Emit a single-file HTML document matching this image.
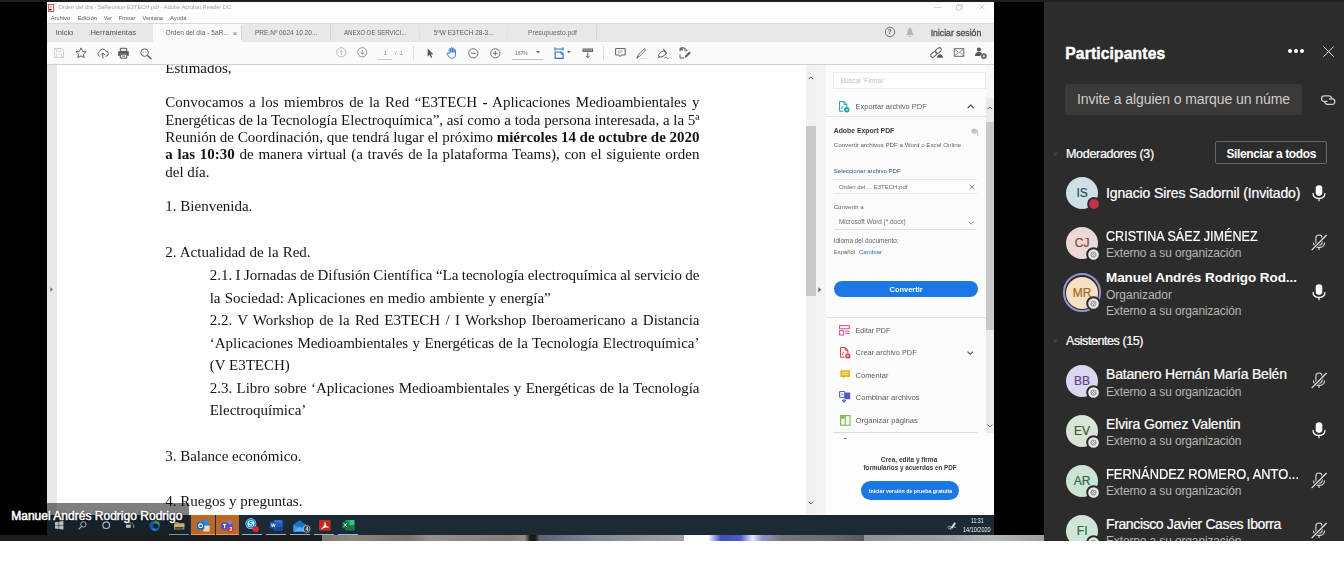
<!DOCTYPE html>
<html lang="es">
<head>
<meta charset="utf-8">
<title>Participantes</title>
<style>
*{box-sizing:border-box;margin:0;padding:0}
html,body{width:1344px;height:576px;overflow:hidden;background:#fff}
body{position:relative;font-family:"Liberation Sans",sans-serif}
.abs{position:absolute}
.t{position:absolute;white-space:pre;line-height:1}
.ln{position:absolute;white-space:nowrap;font-family:"Liberation Serif",serif;font-size:15px;line-height:17px;color:#141414;height:17px;white-space:pre}
.j{text-align:justify;text-align-last:justify;white-space:normal}
svg{overflow:visible}
</style>
</head>
<body>
<div class="abs" style="left:0.0px;top:0.0px;width:1044.0px;height:541.0px;background:#000;"></div>
<div class="abs" style="left:0;top:0;width:1044px;height:541px;filter:blur(0.45px)">
<div class="abs" style="left:0.0px;top:0.0px;width:1044.0px;height:541.0px;background:#000;"></div>
<div class="abs" style="left:47.0px;top:2.0px;width:947.0px;height:513.0px;background:#fdfdfd;"></div>
<svg class="abs" style="left:48.3px;top:3.5px;" width="6" height="8" viewBox="0 0 6 8"><rect x="0.4" y="0.4" width="5.2" height="7.2" fill="#fff" stroke="#d8453a" stroke-width="0.9"/><rect x="1.3" y="4.8" width="2.2" height="1.6" fill="#222"/><rect x="2" y="1.6" width="1.2" height="2" fill="#e0877f"/></svg>
<div class="t" style="left:58.4px;top:5.4px;font-size:5.69px;color:#a3a3a3;">Orden del día - 5aReunion E3TECH.pdf - Adobe Acrobat Reader DC</div>
<svg class="abs" style="left:933.0px;top:3.0px;" width="54" height="9" viewBox="0 0 54 9"><path d="M1 4.5h7" stroke="#c9c9c9" stroke-width="0.8" fill="none"/><path d="M23.5 2.5h4.5v4.5h-4.5zM25 2.5v-1.2h4.3v4.3h-1.3" stroke="#c6c6c6" stroke-width="0.8" fill="none"/><path d="M46.5 1.5l5 5M51.5 1.5l-5 5" stroke="#c6c6c6" stroke-width="0.8" fill="none"/></svg>
<div class="t" style="left:50.7px;top:15.9px;font-size:5.88px;color:#5a5a5a;">Archivo</div>
<div class="t" style="left:77.7px;top:15.9px;font-size:5.88px;color:#5a5a5a;">Edición</div>
<div class="t" style="left:103.8px;top:16.2px;font-size:5.46px;color:#5a5a5a;">Ver</div>
<div class="t" style="left:118.7px;top:16.0px;font-size:5.82px;color:#5a5a5a;">Firmar</div>
<div class="t" style="left:142.5px;top:16.1px;font-size:5.58px;color:#5a5a5a;">Ventana</div>
<div class="t" style="left:170.0px;top:16.0px;font-size:5.86px;color:#5a5a5a;">Ayuda</div>
<div class="abs" style="left:47.0px;top:23.3px;width:947.0px;height:18.3px;background:#e8e8e8;border-top:1px solid #d9d9d9;"></div>
<div class="t" style="left:55.7px;top:29.2px;font-size:7.54px;color:#505050;">Inicio</div>
<div class="t" style="left:90.4px;top:29.1px;font-size:7.6px;color:#505050;">Herramientas</div>
<div class="abs" style="left:153.0px;top:23.8px;width:88.5px;height:18.2px;background:#fafafa;"></div>
<div class="t" style="left:165.5px;top:29.9px;font-size:6.6px;color:#5c5c5c;">Orden del día - 5aR...</div>
<div class="t" style="left:233.0px;top:29.8px;font-size:7px;color:#555;letter-spacing:0.506px;">×</div>
<div class="abs" style="left:241.1px;top:25.0px;width:0.8px;height:15.0px;background:#d0d0d0;"></div>
<div class="abs" style="left:329.9px;top:25.0px;width:0.8px;height:15.0px;background:#d2d2d2;"></div>
<div class="abs" style="left:418.6px;top:25.0px;width:0.8px;height:15.0px;background:#e0e0e0;"></div>
<div class="abs" style="left:507.4px;top:25.0px;width:0.8px;height:15.0px;background:#e1e1e1;"></div>
<div class="abs" style="left:596.2px;top:25.0px;width:0.8px;height:15.0px;background:#d9d9d9;"></div>
<div class="t" style="left:254.9px;top:30.0px;font-size:6.55px;color:#5c5c5c;">PRE.Nº 0024 10 20...</div>
<div class="t" style="left:343.7px;top:30.0px;font-size:6.6px;color:#5c5c5c;transform:scaleX(0.9236);transform-origin:0 50%;">ANEXO DE SERVICI...</div>
<div class="t" style="left:433.8px;top:30.0px;font-size:6.51px;color:#5c5c5c;">5ºW E3TECH 28-3...</div>
<div class="t" style="left:527.9px;top:29.9px;font-size:6.74px;color:#6a6a6a;">Presupuesto.pdf</div>
<svg class="abs" style="left:883.5px;top:26.0px;" width="12" height="12" viewBox="0 0 12 12"><circle cx="6" cy="6" r="4.7" fill="none" stroke="#6e6e6e" stroke-width="1"/></svg>
<div class="t" style="left:887.5px;top:29.2px;font-size:6.87px;color:#5a5a5a;font-weight:700;">?</div>
<svg class="abs" style="left:905.0px;top:26.5px;" width="10" height="11" viewBox="0 0 10 11"><path d="M5 0.5C3.2 1.6 2.6 3.5 2.6 5.5L1.2 8.2h7.6L7.4 5.5C7.4 3.5 6.8 1.6 5 0.5zM3.9 9h2.2v1H3.9z" fill="#b4b4b4"/></svg>
<div class="t" style="left:930.7px;top:28.6px;font-size:8.67px;color:#4a4a4a;-webkit-text-stroke:0.3px #4a4a4a;">Iniciar sesión</div>
<div class="abs" style="left:47.0px;top:42.0px;width:947.0px;height:22.5px;background:#fbfbfb;border-bottom:1px solid #d0d0d0;"></div>
<svg class="abs" style="left:54.0px;top:48.0px;" width="10" height="10" viewBox="0 0 10 10"><path d="M0.5 0.5h7l2 2v7h-9z" fill="none" stroke="#cfcfcf" stroke-width="1"/><path d="M2.5 0.5v3h4.5v-3M2.5 9.5v-3.5h5v3.5" fill="none" stroke="#d6d6d6" stroke-width="0.9"/></svg>
<svg class="abs" style="left:75.0px;top:47.3px;" width="12" height="11" viewBox="0 0 12 11"><path d="M6 0.9l1.55 3.3 3.55 0.45-2.6 2.45 0.68 3.55L6 8.9 2.82 10.65l0.68-3.55L0.9 4.65l3.55-0.45z" fill="none" stroke="#5f5f5f" stroke-width="1" stroke-linejoin="round"/></svg>
<svg class="abs" style="left:97.0px;top:47.5px;" width="12" height="11" viewBox="0 0 12 11"><path d="M3.2 8.2H2.8A2.3 2.3 0 0 1 2.6 3.7 3.2 3.2 0 0 1 8.8 3.2 2.5 2.5 0 0 1 9 8.2H8.6" fill="none" stroke="#5f5f5f" stroke-width="1"/><path d="M5.8 10.6V5M3.9 6.8l1.9-1.9 1.9 1.9" fill="none" stroke="#5f5f5f" stroke-width="1"/></svg>
<svg class="abs" style="left:118.3px;top:47.5px;" width="11" height="10.5" viewBox="0 0 11 10.5"><path d="M2.3 0.3h6.4v3H2.3z" fill="none" stroke="#555" stroke-width="1"/><path d="M0.2 3.2h10.6v4.6H8.8v-2H2.2v2H0.2z" fill="#555"/><path d="M2.3 6.3h6.4v3.8H2.3z" fill="#fbfbfb" stroke="#555" stroke-width="1"/><rect x="4.2" y="7.6" width="2.6" height="1" fill="#555"/></svg>
<svg class="abs" style="left:140.2px;top:47.5px;" width="12" height="11.5" viewBox="0 0 12 11.5"><circle cx="4.6" cy="4.6" r="3.8" fill="none" stroke="#5f5f5f" stroke-width="1"/><path d="M7.4 7.4l4 3.6" stroke="#5f5f5f" stroke-width="1.3"/><circle cx="3.6" cy="4.2" r="0.45" fill="#888"/><circle cx="5.6" cy="4.2" r="0.45" fill="#888"/></svg>
<svg class="abs" style="left:335.6px;top:47.4px;" width="11" height="11" viewBox="0 0 11 11"><circle cx="5.3" cy="5.3" r="4.6" fill="none" stroke="#b6b6b6" stroke-width="1"/><path d="M5.3 7.8V3.6M3.7 5l1.6-1.6L6.9 5" fill="none" stroke="#b6b6b6" stroke-width="0.9"/></svg>
<svg class="abs" style="left:357.3px;top:47.4px;" width="11" height="11" viewBox="0 0 11 11"><circle cx="5.3" cy="5.3" r="4.6" fill="none" stroke="#909090" stroke-width="1"/><path d="M5.3 2.8V7M3.7 5.6l1.6 1.6 1.6-1.6" fill="none" stroke="#909090" stroke-width="0.9"/></svg>
<div class="t" style="left:383.8px;top:50.3px;font-size:6px;color:#777;letter-spacing:-0.744px;">1</div>
<div class="abs" style="left:378.0px;top:59.1px;width:13.8px;height:0.8px;background:#c8c8c8;"></div>
<div class="t" style="left:395.0px;top:50.3px;font-size:6px;color:#8a8a8a;letter-spacing:0.576px;">/ 1</div>
<div class="abs" style="left:413.0px;top:46.0px;width:0.8px;height:14.0px;background:#e0e0e0;"></div>
<svg class="abs" style="left:426.7px;top:47.5px;" width="7" height="11" viewBox="0 0 7 11"><path d="M0.6 0.4v8.4l2-1.9 1.4 3.1 1.3-0.6-1.4-3 2.6-0.2z" fill="#5a5a5a"/></svg>
<svg class="abs" style="left:445.8px;top:47.0px;" width="12" height="12" viewBox="0 0 12 12"><path d="M3.2 6.6V2.4a0.8 0.8 0 0 1 1.6 0V5.4 1.5a0.8 0.8 0 0 1 1.6 0V5.4 2a0.8 0.8 0 0 1 1.6 0V5.6 3.3a0.75 0.75 0 0 1 1.5 0V7.6c0 2.2-1.3 3.6-3.6 3.6-1.7 0-2.6-0.7-3.5-2.1L1 6.9c-0.5-0.8 0.6-1.5 1.2-0.8z" fill="none" stroke="#2a6fd6" stroke-width="0.9" stroke-linejoin="round"/></svg>
<svg class="abs" style="left:467.5px;top:47.5px;" width="11" height="11" viewBox="0 0 11 11"><circle cx="5.3" cy="5.3" r="4.6" fill="none" stroke="#5f5f5f" stroke-width="0.9"/><path d="M3 5.3h4.6" stroke="#5f5f5f" stroke-width="0.9"/></svg>
<svg class="abs" style="left:489.6px;top:47.5px;" width="11" height="11" viewBox="0 0 11 11"><circle cx="5.3" cy="5.3" r="4.6" fill="none" stroke="#5f5f5f" stroke-width="0.9"/><path d="M3 5.3h4.6M5.3 3v4.6" stroke="#5f5f5f" stroke-width="0.9"/></svg>
<div class="t" style="left:515.2px;top:50.4px;font-size:6.2px;color:#6e6e6e;transform:scaleX(0.8024);transform-origin:0 50%;">167%</div>
<svg class="abs" style="left:536.3px;top:51.4px;" width="4" height="3" viewBox="0 0 4 3"><path d="M0 0h4L2 2.4z" fill="#666"/></svg>
<div class="abs" style="left:512.3px;top:59.1px;width:31.2px;height:0.8px;background:#c4c4c4;"></div>
<svg class="abs" style="left:554.3px;top:46.8px;" width="11" height="12.5" viewBox="0 0 11 12.5"><path d="M1 0.3v3.2M9 0.3v3.2M1 2h8" fill="none" stroke="#2a6fd6" stroke-width="1.1"/><path d="M1.1 5h6.2l1.8 1.8v4.6H1.1z" fill="none" stroke="#2a6fd6" stroke-width="1.1"/><path d="M7 5v2.1h2.1" fill="none" stroke="#2a6fd6" stroke-width="0.9"/></svg>
<svg class="abs" style="left:567.0px;top:51.4px;" width="4" height="3" viewBox="0 0 4 3"><path d="M0 0h3.6L1.8 2.2z" fill="#666"/></svg>
<svg class="abs" style="left:581.8px;top:47.6px;" width="12" height="11" viewBox="0 0 12 11"><rect x="0.5" y="0.5" width="10.6" height="3.4" fill="#5f5f5f"/><path d="M2.2 1.2v1.6M4.1 1.2v1.6M6 1.2v1.6M7.9 1.2v1.6M9.6 1.2v1.6" stroke="#fbfbfb" stroke-width="0.7"/><path d="M5.8 4.6v5M3.9 7.8l1.9 1.9 1.9-1.9" fill="none" stroke="#5f5f5f" stroke-width="1"/></svg>
<div class="abs" style="left:603.0px;top:46.0px;width:0.8px;height:14.0px;background:#dcdcdc;"></div>
<svg class="abs" style="left:614.6px;top:47.8px;" width="11" height="11" viewBox="0 0 11 11"><path d="M0.6 0.6h9.6v6.4H6.6L5.2 8.6 3.8 7H0.6z" fill="none" stroke="#5f5f5f" stroke-width="1"/><path d="M2.8 3.2h5M2.8 4.8h3.6" stroke="#8a8a8a" stroke-width="0.7"/></svg>
<svg class="abs" style="left:636.0px;top:47.5px;" width="12" height="11.5" viewBox="0 0 12 11.5"><path d="M1.2 9.4c0.6-2 1.6-3.4 3-4.8L8 0.9c0.8-0.7 2 0.3 1.3 1.2L5.9 6c-1.3 1.5-2.7 2.6-4.7 3.4z" fill="none" stroke="#5f5f5f" stroke-width="0.9"/><path d="M0.6 10.4l1.8-2.3" stroke="#5f5f5f" stroke-width="1.2"/><path d="M3.5 10.6h7.5" stroke="#c9c9c9" stroke-width="0.6"/></svg>
<svg class="abs" style="left:656.5px;top:47.5px;" width="13" height="11.5" viewBox="0 0 13 11.5"><path d="M1.8 8.6c-0.6-1.7 0.3-3.6 2-4.4l3.4-1.6 2 3.2-3 2.3c-1.4 1-3.2 1.1-4.4 0.5z" fill="none" stroke="#5f5f5f" stroke-width="1"/><path d="M6.4 0.8l3.4 5" stroke="#5f5f5f" stroke-width="1.1"/><path d="M0.8 10.2l2-2" stroke="#5f5f5f" stroke-width="1"/><path d="M7.6 10.3c0.8-1.4 1.5-1.4 2.1-0.4 0.5 0.8 1.1 0.8 1.9 0.2" fill="none" stroke="#5f5f5f" stroke-width="1"/></svg>
<svg class="abs" style="left:679.0px;top:46.8px;" width="12" height="12.5" viewBox="0 0 12 12.5"><path d="M1 4.2V1.2h1.4V0.6h2V1.2h1.6l2.4 2.6" fill="none" stroke="#5f5f5f" stroke-width="1"/><path d="M1.2 1.2h2.6v2.2H1.2z" fill="#5f5f5f"/><path d="M1 7.4v3.6h4" fill="none" stroke="#5f5f5f" stroke-width="1"/><path d="M5.8 1.2v2.6h2.6" fill="none" stroke="#5f5f5f" stroke-width="0.8"/><path d="M5.6 10.8l0.5-2.1 4.2-4.2 1.5 1.5-4.2 4.2z" fill="#5f5f5f"/></svg>
<svg class="abs" style="left:0.0px;top:0.0px;pointer-events:none;" width="1344" height="576" viewBox="0 0 1344 576"><g fill="none" stroke="#5f5f5f" stroke-width="1"><rect x="930.4" y="52.5" width="6.8" height="3.8" rx="1.9" transform="rotate(-40 933.8 54.4)"/><rect x="934.9" y="48.7" width="6.8" height="3.8" rx="1.9" transform="rotate(-40 938.3 50.6)"/></g><path d="M937 57.7c0.3-2.2 1.3-3.4 3-3.4s2.7 1.2 3 3.4z" fill="#565656"/><rect x="954.3" y="48.7" width="9.5" height="7.6" fill="none" stroke="#5f5f5f" stroke-width="0.9"/><path d="M954.5 48.9l4.55 3.9 4.55-3.9M954.5 56.1l3.5-3.4M963.6 56.1l-3.5-3.4" fill="none" stroke="#5f5f5f" stroke-width="0.7"/><circle cx="978.9" cy="49.6" r="2" fill="#555"/><path d="M974.9 55.9c0.2-2.7 1.6-4 4-4 1.4 0 2.4 0.5 3.1 1.3l-1.8 2.7z" fill="#555"/><circle cx="983.9" cy="56.1" r="2.9" fill="#5a5a5a"/><path d="M982.3 56.1h3.2M983.9 54.5v3.2" stroke="#f4f4f4" stroke-width="0.8"/></svg>
<div class="abs" style="left:47.0px;top:64.6px;width:759.4px;height:450.4px;background:#ffffff;"></div>
<div class="abs" style="left:47.0px;top:64.6px;width:10.3px;height:450.4px;background:#e8e8e8;"></div>
<svg class="abs" style="left:49.5px;top:286.5px;" width="4" height="6" viewBox="0 0 4 6"><path d="M0.3 0.3L3 2.6 0.3 4.9z" fill="#777"/></svg>
<div class="abs" style="left:57.3px;top:64.6px;width:749px;height:450.4px;overflow:hidden">
<div class="ln" style="left:108.0px;top:-5.0px;">Estimados,</div>
<div class="ln" style="left:108.0px;top:29.7px;word-spacing:1.642px;">Convocamos a los miembros de la Red “E3TECH <b>-</b> Aplicaciones Medioambientales y</div>
<div class="ln" style="left:108.0px;top:47.0px;word-spacing:-0.016px;">Energéticas de la Tecnología Electroquímica”, así como a toda persona interesada, a la 5ª</div>
<div class="ln" style="left:108.0px;top:64.5px;word-spacing:-0.075px;">Reunión de Coordinación, que tendrá lugar el próximo <b>miércoles 14 de octubre de 2020</b></div>
<div class="ln" style="left:108.0px;top:81.7px;word-spacing:0.991px;"><b>a las 10:30</b> de manera virtual (a través de la plataforma Teams), con el siguiente orden</div>
<div class="ln" style="left:108.0px;top:99.2px;">del día.</div>
<div class="ln" style="left:108.0px;top:133.9px;">1. Bienvenida.</div>
<div class="ln" style="left:108.0px;top:179.4px;word-spacing:0.290px;">2. Actualidad de la Red.</div>
<div class="ln" style="left:152.4px;top:202.5px;word-spacing:-0.343px;">2.1. I Jornadas de Difusión Científica “La tecnología electroquímica al servicio de</div>
<div class="ln" style="left:152.4px;top:225.1px;word-spacing:0.392px;">la Sociedad: Aplicaciones en medio ambiente y energía”</div>
<div class="ln" style="left:152.4px;top:247.7px;word-spacing:1.535px;">2.2. V Workshop de la Red E3TECH / I Workshop Iberoamericano a Distancia</div>
<div class="ln" style="left:152.4px;top:270.2px;word-spacing:0.643px;">‘Aplicaciones Medioambientales y Energéticas de la Tecnología Electroquímica’</div>
<div class="ln" style="left:152.4px;top:292.5px;">(V E3TECH)</div>
<div class="ln" style="left:152.4px;top:315.3px;word-spacing:0.589px;">2.3. Libro sobre ‘Aplicaciones Medioambientales y Energéticas de la Tecnología</div>
<div class="ln" style="left:152.4px;top:337.8px;">Electroquímica’</div>
<div class="ln" style="left:108.0px;top:383.3px;word-spacing:-0.162px;">3. Balance económico.</div>
<div class="ln" style="left:108.0px;top:428.6px;word-spacing:0.007px;">4. Ruegos y preguntas.</div>
</div>
<div class="abs" style="left:806.4px;top:64.6px;width:9.2px;height:450.4px;background:#f1f1f1;"></div>
<div class="abs" style="left:806.4px;top:125.6px;width:9.2px;height:170.0px;background:#c9c9c9;"></div>
<svg class="abs" style="left:808.3px;top:75.8px;" width="6" height="4" viewBox="0 0 6 4"><path d="M0.5 3.2L2.8 0.9l2.3 2.3" fill="none" stroke="#555" stroke-width="1"/></svg>
<svg class="abs" style="left:808.3px;top:500.8px;" width="6" height="4" viewBox="0 0 6 4"><path d="M0.5 0.6l2.3 2.3L5.1 0.6" fill="none" stroke="#555" stroke-width="1"/></svg>
<div class="abs" style="left:815.6px;top:64.6px;width:10.0px;height:450.4px;background:#f4f4f4;"></div>
<svg class="abs" style="left:818.3px;top:286.6px;" width="4" height="6" viewBox="0 0 4 6"><path d="M0.3 0.3L3.2 2.8 0.3 5.3z" fill="#666"/></svg>
<div class="abs" style="left:825.6px;top:64.6px;width:168.4px;height:450.4px;background:#fcfcfc;"></div>
<div class="abs" style="left:986.0px;top:64.6px;width:8.0px;height:33.4px;background:#f7f7f7;"></div>
<div class="abs" style="left:986.0px;top:98.0px;width:8.0px;height:335.0px;background:#ebebeb;"></div>
<div class="abs" style="left:986.3px;top:122.0px;width:7.7px;height:208.0px;background:#c9c9c9;"></div>
<svg class="abs" style="left:987.0px;top:105.8px;" width="6" height="4" viewBox="0 0 6 4"><path d="M0.5 3.2L2.8 0.9l2.3 2.3" fill="none" stroke="#555" stroke-width="1"/></svg>
<svg class="abs" style="left:987.0px;top:424.2px;" width="6" height="4" viewBox="0 0 6 4"><path d="M0.5 0.6l2.3 2.3L5.1 0.6" fill="none" stroke="#555" stroke-width="1"/></svg>
<div class="abs" style="left:832.8px;top:72.4px;width:153.2px;height:16.4px;background:#fff;border:1px solid #ebebeb;"></div>
<div class="t" style="left:840.7px;top:78.2px;font-size:6.62px;color:#c2c2c2;">Buscar 'Firmar'</div>
<svg class="abs" style="left:839.3px;top:101.0px;" width="11" height="12" viewBox="0 0 11 12"><path d="M0.6 0.6h4.6l2.6 2.6v3M5 0.6v2.8h2.8M0.6 0.6v9.6h3.6" fill="none" stroke="#1a9bb0" stroke-width="1"/><path d="M2.2 7.6c0.6-2 1.4-3.4 1.6-2.2 0.2 1.4-1 2.2-1.6 2.2z" fill="none" stroke="#1a9bb0" stroke-width="0.6"/><circle cx="7.8" cy="8.8" r="2.7" fill="#1a9bb0"/><path d="M6.5 8.8h2.4M8 7.8l1 1-1 1" stroke="#fff" stroke-width="0.7" fill="none"/></svg>
<div class="t" style="left:855.6px;top:103.3px;font-size:7.44px;color:#5a5a5a;">Exportar archivo PDF</div>
<svg class="abs" style="left:967.0px;top:103.8px;" width="8" height="5" viewBox="0 0 8 5"><path d="M0.7 4.2L3.7 1.2l3 3" fill="none" stroke="#444" stroke-width="1.2"/></svg>
<div class="abs" style="left:825.6px;top:115.8px;width:160.4px;height:0.7px;background:#e4e4e4;"></div>
<div class="t" style="left:833.7px;top:128.0px;font-size:6.86px;color:#3a3a3a;font-weight:700;">Adobe Export PDF</div>
<svg class="abs" style="left:970.5px;top:127.5px;" width="8" height="9" viewBox="0 0 8 9"><path d="M3 0.6a2.6 2.6 0 1 0 0 5.2a2.6 2.6 0 1 0 0-5.2z" fill="#c4c4c4"/><path d="M5 2.2h1.6v5.6M5 4.6h1.2" stroke="#bdbdbd" stroke-width="0.9" fill="none"/></svg>
<div class="t" style="left:833.7px;top:142.3px;font-size:6.21px;color:#606060;">Convertir archivos PDF a Word o Excel Online</div>
<div class="t" style="left:833.7px;top:168.4px;font-size:6.1px;color:#2c4f7c;">Seleccionar archivo PDF</div>
<div class="abs" style="left:833.0px;top:179.2px;width:143.5px;height:14.6px;background:#fdfdfd;border-top:1px solid #e6e6e6;border-bottom:1px solid #e6e6e6;"></div>
<div class="t" style="left:838.9px;top:183.9px;font-size:6.03px;color:#666;">Orden del ... E3TECH.pdf</div>
<svg class="abs" style="left:968.6px;top:184.0px;" width="6" height="6" viewBox="0 0 6 6"><path d="M0.5 0.5l4.8 4.8M5.3 0.5L0.5 5.3" stroke="#777" stroke-width="0.9"/></svg>
<div class="t" style="left:833.7px;top:204.4px;font-size:6.15px;color:#606060;">Convertir a</div>
<div class="t" style="left:838.9px;top:219.3px;font-size:6.41px;color:#6a6a6a;">Microsoft Word (*.docx)</div>
<svg class="abs" style="left:967.5px;top:220.6px;" width="7" height="4" viewBox="0 0 7 4"><path d="M0.6 0.5l2.6 2.6L5.8 0.5" fill="none" stroke="#8a8a8a" stroke-width="1"/></svg>
<div class="abs" style="left:833.7px;top:229.0px;width:142.8px;height:0.7px;background:#e2e2e2;"></div>
<div class="t" style="left:833.7px;top:237.9px;font-size:6.43px;color:#606060;">Idioma del documento:</div>
<div class="t" style="left:833.7px;top:248.8px;font-size:5.98px;color:#606060;">Español</div>
<div class="t" style="left:858.9px;top:248.7px;font-size:6.11px;color:#2d6fc4;">Cambiar</div>
<div class="abs" style="left:833.7px;top:281.0px;width:144.0px;height:15.6px;background:#1b77e4;border-radius:8px;"></div>
<div class="t" style="left:889.5px;top:285.6px;font-size:7.47px;color:#fff;font-weight:700;">Convertir</div>
<div class="abs" style="left:825.6px;top:317.1px;width:160.4px;height:0.7px;background:#e4e4e4;"></div>
<svg class="abs" style="left:839.3px;top:325.0px;" width="11" height="11" viewBox="0 0 11 11"><rect x="0.6" y="0.6" width="9.6" height="3.2" fill="none" stroke="#d8469b" stroke-width="1"/><rect x="0.6" y="5.6" width="4" height="4.4" fill="none" stroke="#d8469b" stroke-width="1"/><path d="M6 6.2h4.4M6 8.4h4.4" stroke="#d8469b" stroke-width="1"/></svg>
<div class="t" style="left:855.6px;top:327.5px;font-size:7.1px;color:#5a5a5a;">Editar PDF</div>
<svg class="abs" style="left:839.8px;top:346.5px;" width="11" height="12" viewBox="0 0 11 12"><path d="M0.6 0.6h4.8l2.4 2.4v3.2M5.2 0.6v2.6h2.6M0.6 0.6v9.6h4" fill="none" stroke="#d7373f" stroke-width="1"/><path d="M2 7.8c0.8-2.2 1.6-3.6 1.8-2.4 0.2 1.4-1.2 2.4-1.8 2.4z" fill="none" stroke="#d7373f" stroke-width="0.6"/><circle cx="7.9" cy="8.9" r="2.6" fill="#d7373f"/><path d="M6.5 8.9h2.8M7.9 7.5v2.8" stroke="#fff" stroke-width="0.7"/></svg>
<div class="t" style="left:855.6px;top:349.4px;font-size:7.38px;color:#5a5a5a;">Crear archivo PDF</div>
<svg class="abs" style="left:967.2px;top:350.6px;" width="7" height="5" viewBox="0 0 7 5"><path d="M0.6 0.6l2.7 2.7L6 0.6" fill="none" stroke="#444" stroke-width="1.1"/></svg>
<svg class="abs" style="left:839.5px;top:369.6px;" width="11" height="10" viewBox="0 0 11 10"><path d="M0.3 0.3h9.8v6.6H4.6L3 8.8 3 6.9H0.3z" fill="#e8b520"/><path d="M2 2.4h6.4M2 4.4h6.4" stroke="#fff3c4" stroke-width="0.8"/></svg>
<div class="t" style="left:855.6px;top:371.5px;font-size:7.47px;color:#5a5a5a;">Comentar</div>
<svg class="abs" style="left:838.5px;top:391.0px;" width="12" height="12" viewBox="0 0 12 12"><path d="M0.6 0.6h5.2v5.8H0.6z" fill="none" stroke="#5258c8" stroke-width="1"/><path d="M5.6 1.6h5.6v6.6H5.6z" fill="#5258c8"/><path d="M1.8 4.6l1.4-2 1.4 2" stroke="#5258c8" stroke-width="0.7" fill="none"/><path d="M5 8v2.4M3.2 9.2l1.8 1.8 1.8-1.8" fill="none" stroke="#5258c8" stroke-width="1.1"/></svg>
<div class="t" style="left:855.6px;top:394.2px;font-size:7.7px;color:#5a5a5a;">Combinar archivos</div>
<svg class="abs" style="left:839.6px;top:414.8px;" width="11" height="11" viewBox="0 0 11 11"><rect x="0.6" y="0.6" width="9.4" height="9.6" fill="#f6fbf0" stroke="#6fb33c" stroke-width="1"/><path d="M5.3 0.6v9.6" stroke="#6fb33c" stroke-width="1"/><rect x="1.2" y="1.2" width="3.4" height="2.4" fill="#6fb33c"/></svg>
<div class="t" style="left:855.6px;top:417.0px;font-size:7.64px;color:#5a5a5a;">Organizar páginas</div>
<div class="abs" style="left:833.0px;top:432.3px;width:144.0px;height:0.7px;background:#dcdcdc;"></div>
<div class="abs" style="left:843.5px;top:437.6px;width:3.0px;height:0.8px;background:#777;"></div>
<div class="abs" style="left:825.6px;top:440.0px;width:168.4px;height:75.0px;background:#fdfdfd;"></div>
<div class="t" style="left:880.8px;top:457.2px;font-size:6.52px;color:#3a3a3a;font-weight:700;">Crea, edita y firma</div>
<div class="t" style="left:863.5px;top:465.1px;font-size:6.31px;color:#3a3a3a;font-weight:700;">formularios y acuerdos en PDF</div>
<div class="abs" style="left:861.0px;top:481.0px;width:97.6px;height:19.3px;background:#1b77e4;border-radius:10px;"></div>
<div class="t" style="left:868.6px;top:487.9px;font-size:6.2px;color:#fff;font-weight:700;transform:scaleX(0.8520);transform-origin:0 50%;">Iniciar versión de prueba gratuita</div>
<div class="abs" style="left:47.0px;top:515.0px;width:946.5px;height:20.3px;background:#1b2a34;"></div>
<svg class="abs" style="left:55.2px;top:521.0px;" width="8.4" height="8.4" viewBox="0 0 8.4 8.4"><path d="M0 1.2l3.6-0.5v3.3H0zM4.2 0.6L8.4 0v4H4.2zM0 4.6h3.6v3.3L0 7.4zM4.2 4.6h4.2v4l-4.2-0.6z" fill="#e8edf0"/></svg>
<svg class="abs" style="left:78.0px;top:521.0px;" width="9" height="9" viewBox="0 0 9 9"><circle cx="5.4" cy="3.4" r="2.7" fill="none" stroke="#cfd6da" stroke-width="1"/><path d="M3.5 5.4L0.6 8.3" stroke="#cfd6da" stroke-width="1.1"/></svg>
<svg class="abs" style="left:102.0px;top:521.3px;" width="8.4" height="8.4" viewBox="0 0 8.4 8.4"><circle cx="4.2" cy="4.2" r="3.3" fill="none" stroke="#dfe5e8" stroke-width="1.1"/></svg>
<svg class="abs" style="left:125.0px;top:521.5px;" width="10" height="8" viewBox="0 0 10 8"><rect x="1" y="2.6" width="4.8" height="3.2" fill="#dfe5e8"/><path d="M1 0.8h5M7.2 0.6v1.6M8.6 2.6v3.2" stroke="#b9c3c9" stroke-width="0.9"/></svg>
<svg class="abs" style="left:149.3px;top:520.3px;" width="11.5" height="11.5" viewBox="0 0 11.5 11.5"><circle cx="5.7" cy="5.7" r="5.4" fill="#1668c8"/><path d="M5.7 0.3a5.4 5.4 0 0 1 5.3 4.4H5.2z" fill="#3fb56a"/><circle cx="6.6" cy="6" r="2.5" fill="#1b2a34"/><path d="M3 9.6c2 1.6 5 1.6 7-0.6-1.6 0.8-4.4 0.8-5.4-1.6z" fill="#35a0e8"/></svg>
<svg class="abs" style="left:174.0px;top:521.8px;" width="10.4" height="7.6" viewBox="0 0 10.4 7.6"><path d="M0 0h4l1 1h5.4v6.6H0z" fill="#cdb36a"/><rect x="0" y="2.4" width="10.4" height="2.2" fill="#f1e2a6"/><rect x="1.2" y="5.2" width="8" height="1.4" fill="#2c3b44"/></svg>
<div class="abs" style="left:169.2px;top:533.6px;width:19.6px;height:1.4px;background:#8fb4dc;"></div>
<div class="abs" style="left:191.4px;top:515.0px;width:23.7px;height:20.3px;background:#b9682b;"></div>
<div class="abs" style="left:215.8px;top:515.0px;width:23.4px;height:20.3px;background:#b9682b;"></div>
<div class="abs" style="left:191.4px;top:534.0px;width:23.7px;height:1.3px;background:#d9a06a;"></div>
<div class="abs" style="left:215.8px;top:534.0px;width:23.4px;height:1.3px;background:#d9a06a;"></div>
<svg class="abs" style="left:197.4px;top:519.6px;" width="13" height="12.4" viewBox="0 0 13 12.4"><rect x="3.4" y="0.6" width="8.6" height="8" rx="1" fill="#2a8ae0"/><rect x="6.2" y="5.6" width="6.4" height="6" fill="#f1d9a8"/><rect x="0" y="2.2" width="7.2" height="7.2" rx="1.2" fill="#1566c0"/><circle cx="3.6" cy="5.8" r="1.9" fill="none" stroke="#fff" stroke-width="1.1"/></svg>
<svg class="abs" style="left:221.4px;top:519.6px;" width="13" height="12.4" viewBox="0 0 13 12.4"><circle cx="8.8" cy="2.6" r="2" fill="#7b83eb"/><rect x="5" y="4" width="7.4" height="6.6" rx="1.6" fill="#5059c9"/><rect x="0" y="2.4" width="7.2" height="7.2" rx="1.2" fill="#4b53bc"/><path d="M2 4.4h3.2M3.6 4.4v3.8" stroke="#fff" stroke-width="1"/><circle cx="9.6" cy="9.4" r="2.9" fill="#d13438"/></svg>
<div class="t" style="left:229.6px;top:527.2px;font-size:5.03px;color:#fff;font-weight:700;">2</div>
<svg class="abs" style="left:245.4px;top:518.4px;" width="15" height="15" viewBox="0 0 15 15"><circle cx="5.9" cy="5.7" r="5.4" fill="#eaf6fd"/><circle cx="5.9" cy="5.7" r="4.2" fill="none" stroke="#0d8fd8" stroke-width="1.6"/><path d="M7.6 4.1c-0.9-1-3.3-0.7-3.2 0.6 0.1 1.4 3.3 0.8 3.3 2.3 0 1.4-2.7 1.5-3.5 0.3" fill="none" stroke="#0d8fd8" stroke-width="1.1"/><circle cx="10.7" cy="11" r="3.1" fill="#e0262d"/></svg>
<div class="abs" style="left:241.9px;top:533.6px;width:20.1px;height:1.4px;background:#8fb4dc;"></div>
<svg class="abs" style="left:269.6px;top:519.8px;" width="13" height="10.6" viewBox="0 0 13 10.6"><rect x="3.6" y="0" width="9" height="10.4" rx="0.8" fill="#2f6fd4"/><rect x="3.6" y="3.4" width="9" height="3.4" fill="#2458b8"/><rect x="3.6" y="6.8" width="9" height="3.6" fill="#1a459c"/><rect x="0" y="2" width="6.6" height="6.6" rx="0.8" fill="#1e55b0"/><path d="M1.4 3.8l0.9 3 1-3 1 3 0.9-3" fill="none" stroke="#fff" stroke-width="0.8"/></svg>
<div class="abs" style="left:266.0px;top:533.6px;width:20.1px;height:1.4px;background:#8fb4dc;"></div>
<svg class="abs" style="left:293.2px;top:518.8px;" width="18" height="13.6" viewBox="0 0 18 13.6"><path d="M0.4 5.4L6.6 1l6.2 4.4v7H0.4z" fill="#1c6fc4"/><path d="M0.4 5.6l6.2 4 6.2-4v6.8H0.4z" fill="#3a9be8"/><path d="M0.4 12.4l6.2-5 6.2 5z" fill="#55b0f2"/><circle cx="13.6" cy="10" r="3.4" fill="#2a343c" stroke="#d8dde0" stroke-width="0.7"/></svg>
<div class="t" style="left:305.4px;top:527.1px;font-size:5.03px;color:#fff;font-weight:700;">4</div>
<div class="abs" style="left:290.1px;top:533.6px;width:20.1px;height:1.4px;background:#8fb4dc;"></div>
<svg class="abs" style="left:318.8px;top:519.5px;" width="11.6" height="10.8" viewBox="0 0 11.6 10.8"><rect x="0" y="0" width="11.6" height="10.8" rx="1.2" fill="#c8271c"/><path d="M2.4 8.6c1.8-1.2 3-3.6 3.2-6.2 0.1-0.9 1-0.7 0.9 0.2C6.2 5 7.6 6.6 9.4 6.8c0.8 0.1 0.7 0.9-0.1 0.8C7 7.2 4.6 7.8 2.8 9.2c-0.5 0.3-0.9-0.2-0.4-0.6z" fill="#fff"/></svg>
<div class="abs" style="left:314.2px;top:533.6px;width:19.5px;height:1.4px;background:#8fb4dc;"></div>
<svg class="abs" style="left:342.2px;top:519.8px;" width="12.6" height="10.4" viewBox="0 0 12.6 10.4"><rect x="3.4" y="0" width="9" height="10.2" rx="0.8" fill="#21a366"/><rect x="3.4" y="5.1" width="9" height="5.1" fill="#167a48"/><rect x="7.9" y="0" width="4.5" height="5.1" fill="#33c481"/><rect x="0" y="1.8" width="6.6" height="6.6" rx="0.8" fill="#0f6e3c"/><path d="M1.8 3.4l3 3.4M4.8 3.4l-3 3.4" stroke="#fff" stroke-width="0.9"/></svg>
<div class="abs" style="left:338.3px;top:533.6px;width:20.1px;height:1.4px;background:#8fb4dc;"></div>
<svg class="abs" style="left:946.5px;top:520.5px;" width="10" height="10" viewBox="0 0 10 10"><path d="M3.6 6.6L7.4 1.2l1.6 1.2L5.2 7.8z" fill="#d4dadd"/><path d="M3.4 6.9l1.5 1.1-2 0.8z" fill="#d4dadd"/><circle cx="2.3" cy="6.4" r="1.3" fill="none" stroke="#c8d0d4" stroke-width="0.7"/><path d="M5.6 5.4l3.2 1.2" stroke="#c8d0d4" stroke-width="0.8"/></svg>
<div class="t" style="left:970.6px;top:518.0px;font-size:6.9px;color:#f4f6f7;transform:scaleX(0.7470);transform-origin:0 50%;">11:31</div>
<div class="t" style="left:963.3px;top:527.1px;font-size:6.9px;color:#f4f6f7;transform:scaleX(0.8000);transform-origin:0 50%;">14/10/2020</div>
<div class="abs" style="left:0.0px;top:535.3px;width:1044.0px;height:5.7px;background:#1d1d1d;"></div>
<div class="abs" style="left:322px;top:535.3px;width:362px;height:5.7px;background:linear-gradient(90deg,#7d766f 0,#8f877e 8%,#7a726a 24%,#96908a 30%,#857e77 52%,#968e85 56%,#1a1a1c 57.5%,#1a1a1c 59%,#5d6670 60%,#7f8890 75%,#a0a4a6 100%)"></div>
<div class="abs" style="left:684.0px;top:535.3px;width:360.0px;height:5.7px;background:#fff;"></div>
<div class="abs" style="left:708px;top:535.3px;width:72px;height:5.7px;background:linear-gradient(90deg,#fff 0,#3f4fb4 18%,#4a5cc4 45%,#e8ecf8 62%,#8c96c8 75%,#7c7c80 100%)"></div>
<div class="abs" style="left:780px;top:535.3px;width:84px;height:5.7px;background:linear-gradient(90deg,#77777a,#6c6c6e 60%,#585858)"></div>
<div class="abs" style="left:864px;top:535.3px;width:180px;height:5.7px;background:linear-gradient(90deg,#8e9492,#9ea4a2 50%,#b4bab8 70%,#9ea3a1)"></div>
</div>
<div class="abs" style="left:0.0px;top:503.2px;width:188.8px;height:11.8px;background:rgba(0,0,0,0.5);"></div>
<div class="abs" style="left:47.0px;top:515.0px;width:141.8px;height:20.3px;background:rgba(0,0,0,0.18);"></div>
<div class="t" style="left:11.2px;top:510.4px;font-size:12px;color:#fff;letter-spacing:0.015px;-webkit-text-stroke:0.5px #fff;text-shadow:0 0 2px rgba(0,0,0,.9),0 1px 1px rgba(0,0,0,.8);">Manuel Andrés Rodrigo Rodrigo</div>
<div class="abs" style="left:1044.0px;top:0.0px;width:300.0px;height:541.0px;background:#2d2c2c;"></div>
<div class="abs" style="left:1044px;top:0;width:300px;height:541px;overflow:hidden">
<div class="abs" style="left:-1044px;top:0;width:1344px;height:576px">
<div class="t" style="left:1065.3px;top:46.2px;font-size:15.6px;color:#fff;font-weight:700;letter-spacing:0.159px;-webkit-text-stroke:0.45px #fff;">Participantes</div>
<div class="abs" style="left:1287.9px;top:48.9px;width:3.8px;height:3.8px;border-radius:50%;background:#fff"></div>
<div class="abs" style="left:1294.0px;top:48.9px;width:3.8px;height:3.8px;border-radius:50%;background:#fff"></div>
<div class="abs" style="left:1300.1px;top:48.9px;width:3.8px;height:3.8px;border-radius:50%;background:#fff"></div>
<svg class="abs" style="left:1322.6px;top:46.3px;" width="11.2" height="11.2" viewBox="0 0 11.2 11.2"><path d="M0.4 0.4l10.4 10.4M10.8 0.4L0.4 10.8" stroke="#dcdcdc" stroke-width="1"/></svg>
<div class="abs" style="left:1065.3px;top:84.0px;width:237.0px;height:31.4px;background:#3b3a39;border-radius:3px;"></div>
<div class="t" style="left:1077.0px;top:92.1px;font-size:14px;color:#cfcdcb;letter-spacing:-0.079px;">Invite a alguien o marque un núme</div>
<svg class="abs" style="left:0.0px;top:0.0px;" width="1344" height="576" viewBox="0 0 1344 576"><g fill="none" stroke="#d2d0ce" stroke-width="1.3"><path d="M1327.5 101.4h-3.2a2.75 2.75 0 0 1 0-5.5h4.6a2.75 2.75 0 0 1 2.7 3.3"/><path d="M1328.9 98.9h3.2a2.75 2.75 0 0 1 0 5.5h-4.6a2.75 2.75 0 0 1-2.7-3.3"/></g></svg>
<svg class="abs" style="left:1051.5px;top:151.6px;" width="7" height="5" viewBox="0 0 7 5"><path d="M0.3 0.4h6.2L3.4 4.2z" fill="#414040"/></svg>
<div class="t" style="left:1066.0px;top:148.0px;font-size:12.5px;color:#fff;letter-spacing:-0.307px;-webkit-text-stroke:0.22px #fff;">Moderadores (3)</div>
<div class="abs" style="left:1215.3px;top:141.3px;width:111.4px;height:23.0px;background:transparent;border:1px solid #6a6866;border-radius:2px;"></div>
<div class="t" style="left:1226.4px;top:148.2px;font-size:12px;color:#fff;font-weight:700;letter-spacing:-0.378px;">Silenciar a todos</div>
<div class="abs" style="left:1066.1px;top:177.3px;width:32px;height:32px;border-radius:50%;background:#cfdfe6"></div>
<div class="t" style="left:1076.4px;top:187.4px;font-size:12px;color:#2a4a5e;-webkit-text-stroke:0.2px #2a4a5e;">IS</div>
<svg class="abs" style="left:1086.5px;top:196.9px;" width="14" height="14" viewBox="0 0 14 14"><circle cx="7" cy="7" r="5.9" fill="#c4314b" stroke="#2d2c2c" stroke-width="2"/></svg>
<div class="t" style="left:1106.0px;top:186.2px;font-size:14px;color:#fff;letter-spacing:-0.125px;-webkit-text-stroke:0.22px #fff;">Ignacio Sires Sadornil (Invitado)</div>
<svg class="abs" style="left:1311.7px;top:184.5px;" width="14" height="17" viewBox="0 0 14 17"><rect x="3.7" y="0.3" width="6.6" height="10.6" rx="3.3" fill="#fff"/><path d="M1 8c0 3.4 2.6 5.4 6 5.4s6-2 6-5.4" fill="none" stroke="#fff" stroke-width="1.2"/><path d="M7 13.4v2.8" stroke="#fff" stroke-width="1.2"/></svg>
<div class="abs" style="left:1066.1px;top:226.8px;width:32px;height:32px;border-radius:50%;background:#ead9d6"></div>
<div class="t" style="left:1074.8px;top:236.9px;font-size:12px;color:#7a4a3a;-webkit-text-stroke:0.2px #7a4a3a;">CJ</div>
<svg class="abs" style="left:1086.0px;top:246.5px;" width="15" height="15" viewBox="0 0 15 15"><circle cx="7.5" cy="7.5" r="6.3" fill="#ececec" stroke="#2d2c2c" stroke-width="2"/><circle cx="7.5" cy="7.5" r="3.1" fill="#a2a2a2"/><path d="M6.1 6.1l2.8 2.8M8.9 6.1L6.1 8.9" stroke="#f4f4f4" stroke-width="0.9"/></svg>
<div class="t" style="left:1106.0px;top:228.7px;font-size:14px;color:#fff;-webkit-text-stroke:0.22px #fff;transform:scaleX(0.8980);transform-origin:0 50%;">CRISTINA SÁEZ JIMÉNEZ</div>
<div class="t" style="left:1106.0px;top:247.4px;font-size:12px;color:#b8b5b2;letter-spacing:-0.138px;">Externo a su organización</div>
<svg class="abs" style="left:1310.7px;top:234.2px;" width="16" height="17.6" viewBox="0 0 16 17.6"><rect x="4.9" y="1" width="6.2" height="10" rx="3.1" fill="none" stroke="#e2e0de" stroke-width="1.1"/><path d="M2.4 8.4c0 3 2.4 5 5.6 5s5.6-2 5.6-5" fill="none" stroke="#e2e0de" stroke-width="1.1"/><path d="M8 13.4v2.6" stroke="#e2e0de" stroke-width="1.1"/><path d="M0.6 16.2L15.6 1" stroke="#2d2c2c" stroke-width="3"/><path d="M0.6 16.2L15.6 1" stroke="#f0f0f0" stroke-width="1.1"/></svg>
<div class="abs" style="left:1062.7px;top:273.1px;width:38.8px;height:38.8px;border-radius:50%;border:2px solid #9396d0"></div>
<div class="abs" style="left:1066.1px;top:276.5px;width:32px;height:32px;border-radius:50%;background:#f8e0c4"></div>
<div class="t" style="left:1072.8px;top:286.6px;font-size:12px;color:#a4691e;-webkit-text-stroke:0.2px #a4691e;">MR</div>
<svg class="abs" style="left:1086.0px;top:296.4px;" width="15" height="15" viewBox="0 0 15 15"><circle cx="7.5" cy="7.5" r="6.3" fill="#ececec" stroke="#2d2c2c" stroke-width="2"/><circle cx="7.5" cy="7.5" r="3.1" fill="#a2a2a2"/><path d="M6.1 6.1l2.8 2.8M8.9 6.1L6.1 8.9" stroke="#f4f4f4" stroke-width="0.9"/></svg>
<div class="t" style="left:1106.0px;top:271.0px;font-size:13.5px;color:#fff;font-weight:700;letter-spacing:-0.076px;">Manuel Andrés Rodrigo Rod...</div>
<div class="t" style="left:1106.0px;top:289.2px;font-size:12px;color:#b8b5b2;letter-spacing:-0.013px;">Organizador</div>
<div class="t" style="left:1106.0px;top:304.8px;font-size:12px;color:#b8b5b2;letter-spacing:-0.138px;">Externo a su organización</div>
<svg class="abs" style="left:1311.7px;top:284.0px;" width="14" height="17" viewBox="0 0 14 17"><rect x="3.7" y="0.3" width="6.6" height="10.6" rx="3.3" fill="#fff"/><path d="M1 8c0 3.4 2.6 5.4 6 5.4s6-2 6-5.4" fill="none" stroke="#fff" stroke-width="1.2"/><path d="M7 13.4v2.8" stroke="#fff" stroke-width="1.2"/></svg>
<svg class="abs" style="left:1051.5px;top:339.2px;" width="7" height="5" viewBox="0 0 7 5"><path d="M0.3 0.4h6.2L3.4 4.2z" fill="#414040"/></svg>
<div class="t" style="left:1066.0px;top:335.3px;font-size:12.5px;color:#fff;letter-spacing:-0.425px;-webkit-text-stroke:0.22px #fff;">Asistentes (15)</div>
<div class="abs" style="left:1066.1px;top:365.1px;width:32px;height:32px;border-radius:50%;background:#dcd6ee"></div>
<div class="t" style="left:1074.1px;top:375.2px;font-size:12px;color:#5a4a8a;-webkit-text-stroke:0.2px #5a4a8a;">BB</div>
<svg class="abs" style="left:1086.0px;top:384.8px;" width="15" height="15" viewBox="0 0 15 15"><circle cx="7.5" cy="7.5" r="6.3" fill="#ececec" stroke="#2d2c2c" stroke-width="2"/><circle cx="7.5" cy="7.5" r="3.1" fill="#a2a2a2"/><path d="M6.1 6.1l2.8 2.8M8.9 6.1L6.1 8.9" stroke="#f4f4f4" stroke-width="0.9"/></svg>
<div class="t" style="left:1106.0px;top:366.7px;font-size:14px;color:#fff;letter-spacing:-0.193px;-webkit-text-stroke:0.22px #fff;">Batanero Hernán María Belén</div>
<div class="t" style="left:1106.0px;top:385.7px;font-size:12px;color:#b8b5b2;letter-spacing:-0.138px;">Externo a su organización</div>
<svg class="abs" style="left:1310.7px;top:371.7px;" width="16" height="17.6" viewBox="0 0 16 17.6"><rect x="4.9" y="1" width="6.2" height="10" rx="3.1" fill="none" stroke="#e2e0de" stroke-width="1.1"/><path d="M2.4 8.4c0 3 2.4 5 5.6 5s5.6-2 5.6-5" fill="none" stroke="#e2e0de" stroke-width="1.1"/><path d="M8 13.4v2.6" stroke="#e2e0de" stroke-width="1.1"/><path d="M0.6 16.2L15.6 1" stroke="#2d2c2c" stroke-width="3"/><path d="M0.6 16.2L15.6 1" stroke="#f0f0f0" stroke-width="1.1"/></svg>
<div class="abs" style="left:1066.1px;top:415.2px;width:32px;height:32px;border-radius:50%;background:#d8e4d6"></div>
<div class="t" style="left:1074.1px;top:425.3px;font-size:12px;color:#3a5a2a;-webkit-text-stroke:0.2px #3a5a2a;">EV</div>
<svg class="abs" style="left:1086.0px;top:434.9px;" width="15" height="15" viewBox="0 0 15 15"><circle cx="7.5" cy="7.5" r="6.3" fill="#ececec" stroke="#2d2c2c" stroke-width="2"/><circle cx="7.5" cy="7.5" r="3.1" fill="#a2a2a2"/><path d="M6.1 6.1l2.8 2.8M8.9 6.1L6.1 8.9" stroke="#f4f4f4" stroke-width="0.9"/></svg>
<div class="t" style="left:1106.0px;top:416.7px;font-size:14px;color:#fff;letter-spacing:-0.141px;-webkit-text-stroke:0.22px #fff;">Elvira Gomez Valentin</div>
<div class="t" style="left:1106.0px;top:434.9px;font-size:12px;color:#b8b5b2;letter-spacing:-0.138px;">Externo a su organización</div>
<svg class="abs" style="left:1311.7px;top:422.0px;" width="14" height="17" viewBox="0 0 14 17"><rect x="3.7" y="0.3" width="6.6" height="10.6" rx="3.3" fill="#fff"/><path d="M1 8c0 3.4 2.6 5.4 6 5.4s6-2 6-5.4" fill="none" stroke="#fff" stroke-width="1.2"/><path d="M7 13.4v2.8" stroke="#fff" stroke-width="1.2"/></svg>
<div class="abs" style="left:1066.1px;top:465.3px;width:32px;height:32px;border-radius:50%;background:#cce4d4"></div>
<div class="t" style="left:1073.8px;top:475.4px;font-size:12px;color:#2a6a4a;-webkit-text-stroke:0.2px #2a6a4a;">AR</div>
<svg class="abs" style="left:1086.0px;top:485.0px;" width="15" height="15" viewBox="0 0 15 15"><circle cx="7.5" cy="7.5" r="6.3" fill="#ececec" stroke="#2d2c2c" stroke-width="2"/><circle cx="7.5" cy="7.5" r="3.1" fill="#a2a2a2"/><path d="M6.1 6.1l2.8 2.8M8.9 6.1L6.1 8.9" stroke="#f4f4f4" stroke-width="0.9"/></svg>
<div class="t" style="left:1106.0px;top:467.4px;font-size:14px;color:#fff;-webkit-text-stroke:0.22px #fff;transform:scaleX(0.9201);transform-origin:0 50%;">FERNÁNDEZ ROMERO, ANTO...</div>
<div class="t" style="left:1106.0px;top:485.3px;font-size:12px;color:#b8b5b2;letter-spacing:-0.138px;">Externo a su organización</div>
<svg class="abs" style="left:1310.7px;top:472.2px;" width="16" height="17.6" viewBox="0 0 16 17.6"><rect x="4.9" y="1" width="6.2" height="10" rx="3.1" fill="none" stroke="#e2e0de" stroke-width="1.1"/><path d="M2.4 8.4c0 3 2.4 5 5.6 5s5.6-2 5.6-5" fill="none" stroke="#e2e0de" stroke-width="1.1"/><path d="M8 13.4v2.6" stroke="#e2e0de" stroke-width="1.1"/><path d="M0.6 16.2L15.6 1" stroke="#2d2c2c" stroke-width="3"/><path d="M0.6 16.2L15.6 1" stroke="#f0f0f0" stroke-width="1.1"/></svg>
<div class="abs" style="left:1066.1px;top:515.0px;width:32px;height:32px;border-radius:50%;background:#d0e6d8"></div>
<div class="t" style="left:1076.8px;top:525.1px;font-size:12px;color:#2a6a4a;-webkit-text-stroke:0.2px #2a6a4a;">FI</div>
<svg class="abs" style="left:1086.0px;top:534.7px;" width="15" height="15" viewBox="0 0 15 15"><circle cx="7.5" cy="7.5" r="6.3" fill="#ececec" stroke="#2d2c2c" stroke-width="2"/><circle cx="7.5" cy="7.5" r="3.1" fill="#a2a2a2"/><path d="M6.1 6.1l2.8 2.8M8.9 6.1L6.1 8.9" stroke="#f4f4f4" stroke-width="0.9"/></svg>
<div class="t" style="left:1106.0px;top:517.0px;font-size:14px;color:#fff;letter-spacing:-0.378px;-webkit-text-stroke:0.22px #fff;">Francisco Javier Cases Iborra</div>
<div class="t" style="left:1106.0px;top:535.0px;font-size:12px;color:#b8b5b2;letter-spacing:-0.138px;">Externo a su organización</div>
<svg class="abs" style="left:1310.7px;top:521.7px;" width="16" height="17.6" viewBox="0 0 16 17.6"><rect x="4.9" y="1" width="6.2" height="10" rx="3.1" fill="none" stroke="#e2e0de" stroke-width="1.1"/><path d="M2.4 8.4c0 3 2.4 5 5.6 5s5.6-2 5.6-5" fill="none" stroke="#e2e0de" stroke-width="1.1"/><path d="M8 13.4v2.6" stroke="#e2e0de" stroke-width="1.1"/><path d="M0.6 16.2L15.6 1" stroke="#2d2c2c" stroke-width="3"/><path d="M0.6 16.2L15.6 1" stroke="#f0f0f0" stroke-width="1.1"/></svg>
</div></div>
<div class="abs" style="left:0.0px;top:0.0px;width:1344.0px;height:2.0px;background:#1f1f1f;"></div>
</body>
</html>
